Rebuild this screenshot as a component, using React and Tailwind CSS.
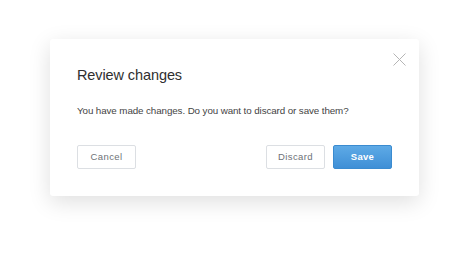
import React from 'react'

const App = () => {
  return (
    <div className="w-[474px] h-[253px] bg-white flex items-start justify-center pt-[39px] pr-[5px]" style={{fontFamily: '"Liberation Sans", Arial, sans-serif'}}>
      <div className="relative w-[369px] h-[157px] bg-white rounded-[3px] shadow-[0_6px_22px_rgba(0,0,0,0.13)] px-[27px] pt-[27px]">
        <button className="absolute right-[13px] top-[14px] w-[13px] h-[13px] text-[#b5b5b5]">
          <svg viewBox="0 0 13 13" width="13" height="13" fill="none" stroke="currentColor" strokeWidth="1">
            <path d="M0.5 0.5 L12.5 12.5 M12.5 0.5 L0.5 12.5" />
          </svg>
        </button>
        <h1 className="text-[14.5px] leading-[18px] font-medium tracking-[-0.1px] text-[#2f2f2f]">Review changes</h1>
        <p className="mt-[20px] text-[9.8px] leading-[14px] tracking-[-0.1px] text-[#444]">
          You have made changes. Do you want to discard or save them?
        </p>
        <div className="mt-[27px] flex items-center justify-between">
          <button className="w-[59px] h-[24px] border border-[#dcdfe3] rounded-[2px] bg-white text-[9.5px] tracking-[0.4px] text-[#6d7277]">
            Cancel
          </button>
          <div className="flex gap-[8px]">
            <button className="w-[59px] h-[24px] border border-[#dcdfe3] rounded-[2px] bg-white text-[9.5px] tracking-[0.4px] text-[#6d7277]">
              Discard
            </button>
            <button className="w-[59px] h-[24px] rounded-[2px] bg-gradient-to-b from-[#5eaae6] to-[#3e8fd6] border border-[#3a8bd0] text-[9.5px] font-bold tracking-[0.3px] text-white">
              Save
            </button>
          </div>
        </div>
      </div>
    </div>
  )
}

export default App
